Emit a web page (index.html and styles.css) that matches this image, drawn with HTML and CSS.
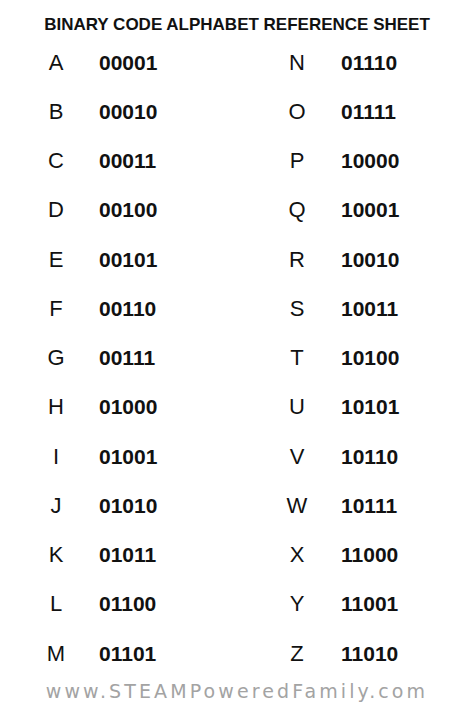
FILE: index.html
```html
<!DOCTYPE html>
<html>
<head>
<meta charset="utf-8">
<link rel="stylesheet" href="styles.css">
</head>
<body>
<div class="sheet">
  <h1 class="title">BINARY CODE ALPHABET REFERENCE SHEET</h1>
  <div class="table">
    <span class="let">A</span><span class="bin">00001</span><span class="let">N</span><span class="bin">01110</span>
    <span class="let">B</span><span class="bin">00010</span><span class="let">O</span><span class="bin">01111</span>
    <span class="let">C</span><span class="bin">00011</span><span class="let">P</span><span class="bin">10000</span>
    <span class="let">D</span><span class="bin">00100</span><span class="let">Q</span><span class="bin">10001</span>
    <span class="let">E</span><span class="bin">00101</span><span class="let">R</span><span class="bin">10010</span>
    <span class="let">F</span><span class="bin">00110</span><span class="let">S</span><span class="bin">10011</span>
    <span class="let">G</span><span class="bin">00111</span><span class="let">T</span><span class="bin">10100</span>
    <span class="let">H</span><span class="bin">01000</span><span class="let">U</span><span class="bin">10101</span>
    <span class="let">I</span><span class="bin">01001</span><span class="let">V</span><span class="bin">10110</span>
    <span class="let">J</span><span class="bin">01010</span><span class="let">W</span><span class="bin">10111</span>
    <span class="let">K</span><span class="bin">01011</span><span class="let">X</span><span class="bin">11000</span>
    <span class="let">L</span><span class="bin">01100</span><span class="let">Y</span><span class="bin">11001</span>
    <span class="let">M</span><span class="bin">01101</span><span class="let">Z</span><span class="bin">11010</span>
  </div>
  <div class="footer">www.STEAMPoweredFamily.com</div>
</div>
</body>
</html>
```

FILE: styles.css
```css
html, body {
  margin: 0;
  padding: 0;
  background: #ffffff;
}
.sheet {
  width: 474px;
  height: 710px;
  box-sizing: border-box;
  padding-top: 14px;
  font-family: "Liberation Sans", Arial, sans-serif;
  color: #111111;
}
.title {
  margin: 0;
  text-align: center;
  font-size: 17px;
  font-weight: bold;
  line-height: 22px;
}
.table {
  margin-top: 2px;
  display: grid;
  grid-template-columns: 41px 30px 28px 183px 30px 29px 1fr;
  grid-auto-rows: 49.25px;
  align-items: center;
}
.let {
  grid-column: 2;
  text-align: center;
  font-size: 22px;
  line-height: 26px;
}
.bin {
  grid-column: 4;
  font-size: 21px;
  font-weight: bold;
  line-height: 26px;
}
.let:nth-child(4n+3) {
  grid-column: 5;
}
.bin:nth-child(4n) {
  grid-column: 7;
}
.footer {
  margin-top: 1px;
  text-align: center;
  font-family: "DejaVu Sans", Verdana, sans-serif;
  font-size: 19px;
  letter-spacing: 3.1px;
  color: #a3a3a3;
  line-height: 24px;
}
```
